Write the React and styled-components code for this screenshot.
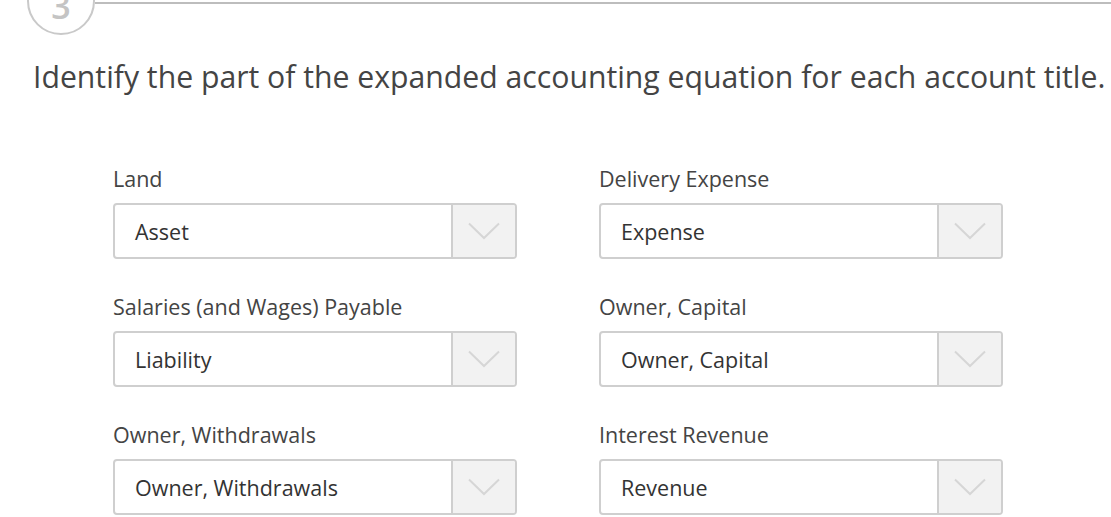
import styled, { createGlobalStyle } from "styled-components"

const Global = createGlobalStyle`
  body {
    margin: 0;
    background: #fff;
    font-family: "Open Sans", "Noto Sans", sans-serif;
    overflow: hidden;
  }
`

const Page = styled.div`
  width: 1111px;
  height: 517px;
  overflow: hidden;
`

const StepBar = styled.div`
  display: flex;
  align-items: flex-start;
  margin-top: -33px;
  padding-left: 27px;
`

const StepCircle = styled.div`
  width: 64px;
  height: 64px;
  box-sizing: content-box;
  border: 2px solid #c9c9c9;
  border-radius: 50%;
  display: flex;
  align-items: center;
  justify-content: center;
  color: #c4c4c4;
  font-size: 34px;
  font-weight: 600;
  line-height: 1;
  padding-top: 0;
  flex-shrink: 0;
`

const Digit = styled.span`
  margin-top: 10px;
`

const StepLine = styled.div`
  flex: 1;
  height: 2px;
  margin-top: 35px;
  background: #bdbdbd;
`

const Heading = styled.h2`
  margin: 22px 0 0 33px;
  font-size: 30.2px;
  font-weight: 400;
  color: #444;
  white-space: nowrap;
  line-height: 40px;
`

const Grid = styled.div`
  display: grid;
  grid-template-columns: 404px 404px;
  column-gap: 82px;
  row-gap: 34px;
  margin: 68px 0 0 113px;
`

const Field = styled.div`
  display: flex;
  flex-direction: column;
`

const Label = styled.label`
  font-size: 21.5px;
  color: #444;
  line-height: 28px;
  margin-bottom: 10px;
`

const Select = styled.div`
  display: flex;
  height: 56px;
  box-sizing: border-box;
  border: 2px solid #cfcfcf;
  border-radius: 4px;
  overflow: hidden;
`

const Value = styled.div`
  flex: 1;
  display: flex;
  align-items: center;
  padding-left: 20px;
  font-size: 21.5px;
  color: #333;
`

const Toggle = styled.div`
  width: 62px;
  border-left: 2px solid #cfcfcf;
  background: #f2f2f2;
  display: flex;
  align-items: center;
  justify-content: center;
`

const Chevron = () => (
  <svg width="32" height="18" viewBox="0 0 32 18">
    <path d="M1 1.5 L16 16 L31 1.5" fill="none" stroke="#d6d6d6" strokeWidth="2" />
  </svg>
)

const fields = [
  { label: "Land", value: "Asset" },
  { label: "Delivery Expense", value: "Expense" },
  { label: "Salaries (and Wages) Payable", value: "Liability" },
  { label: "Owner, Capital", value: "Owner, Capital" },
  { label: "Owner, Withdrawals", value: "Owner, Withdrawals" },
  { label: "Interest Revenue", value: "Revenue" },
]

const App = () => {
  return (
    <Page>
      <Global />
      <StepBar>
        <StepCircle>
          <Digit>3</Digit>
        </StepCircle>
        <StepLine />
      </StepBar>
      <Heading>Identify the part of the expanded accounting equation for each account title.</Heading>
      <Grid>
        {fields.map((f) => (
          <Field key={f.label}>
            <Label>{f.label}</Label>
            <Select>
              <Value>{f.value}</Value>
              <Toggle>
                <Chevron />
              </Toggle>
            </Select>
          </Field>
        ))}
      </Grid>
    </Page>
  )
}

export default App
